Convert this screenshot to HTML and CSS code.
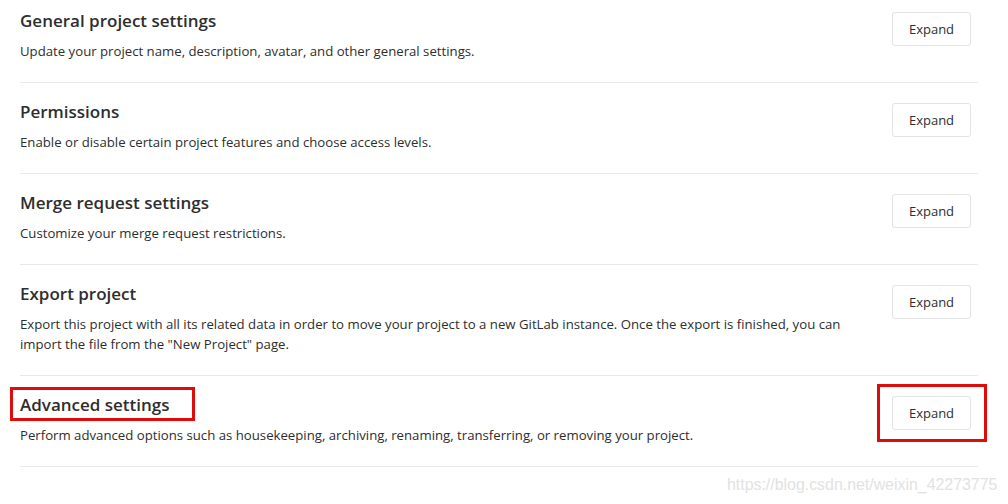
FILE: index.html
```
<!DOCTYPE html>
<html>
<head>
<meta charset="utf-8">
<link rel="stylesheet" href="styles.css">
</head>
<body>
<div class="settings">
  <section class="section">
    <div class="text">
      <h4 class="title">General project settings</h4>
      <p class="desc">Update your project name, description, avatar, and other general settings.</p>
    </div>
    <button class="btn">Expand</button>
  </section>
  <section class="section">
    <div class="text">
      <h4 class="title">Permissions</h4>
      <p class="desc">Enable or disable certain project features and choose access levels.</p>
    </div>
    <button class="btn">Expand</button>
  </section>
  <section class="section">
    <div class="text">
      <h4 class="title">Merge request settings</h4>
      <p class="desc">Customize your merge request restrictions.</p>
    </div>
    <button class="btn">Expand</button>
  </section>
  <section class="section">
    <div class="text">
      <h4 class="title">Export project</h4>
      <p class="desc">Export this project with all its related data in order to move your project to a new GitLab instance. Once the export is finished, you can import the file from the "New Project" page.</p>
    </div>
    <button class="btn">Expand</button>
  </section>
  <section class="section annotated">
    <div class="text">
      <h4 class="title">Advanced settings</h4>
      <p class="desc">Perform advanced options such as housekeeping, archiving, renaming, transferring, or removing your project.</p>
    </div>
    <button class="btn">Expand</button>
    <div class="mark mark-title"></div>
    <div class="mark mark-btn"></div>
  </section>
</div>
<div class="watermark">https://blog.csdn.net/weixin_42273775</div>
</body>
</html>
```
FILE: styles.css
```
html, body {
  margin: 0;
  padding: 0;
  background: #fff;
}
body {
  font-family: "Open Sans", "Noto Sans", sans-serif;
  color: #2e2e2e;
  width: 1008px;
  height: 504px;
  overflow: hidden;
  position: relative;
}
.settings {
  margin-left: 20px;
  width: 958px;
}
.section {
  display: flex;
  align-items: flex-start;
  padding: 17px 0 21px 0;
  border-bottom: 1px solid #e9e9e9;
  position: relative;
}
.section:first-child {
  padding-top: 9px;
}
.text {
  flex: 1;
  padding-right: 110px;
}
.title {
  margin: 0 0 8px 0;
  font-size: 17px;
  line-height: 24px;
  font-weight: 600;
  color: #2e2e2e;
}
.desc {
  margin: 0;
  font-size: 13.2px;
  line-height: 20px;
  color: #2e2e2e;
}
.btn {
  position: absolute;
  right: 7px;
  top: 20px;
  width: 79px;
  height: 34px;
  background: #fff;
  border: 1px solid #e3e3e3;
  border-radius: 3px;
  font-family: "Open Sans", "Noto Sans", sans-serif;
  font-size: 13px;
  color: #2e2e2e;
  padding: 0;
}
.section:first-child .btn {
  top: 12px;
}
.mark {
  position: absolute;
  border: 3px solid #e00b0b;
  box-sizing: border-box;
}
.mark-title {
  left: -10px;
  top: 11px;
  width: 185px;
  height: 34px;
}
.mark-btn {
  left: 857px;
  top: 8px;
  width: 110px;
  height: 58px;
}
.watermark {
  position: absolute;
  left: 727px;
  top: 476px;
  font-family: "Liberation Sans", Arial, sans-serif;
  font-size: 15.9px;
  color: #e2e2e2;
  white-space: nowrap;
}
```
